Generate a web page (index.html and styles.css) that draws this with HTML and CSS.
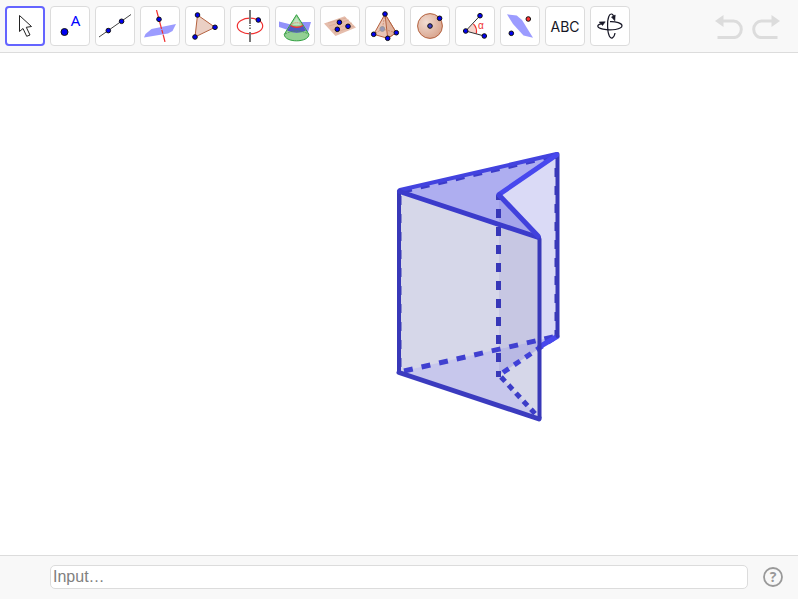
FILE: index.html
```html
<!DOCTYPE html>
<html lang="en">
<head>
<meta charset="utf-8">
<title>3D Graphics</title>
<link rel="stylesheet" href="styles.css">
</head>
<body>
<div class="app">
  <header class="toolbar">
    <div class="tools" role="toolbar" aria-label="Tools">
      <button class="tool selected" type="button" aria-label="Move">
        <svg class="icon" viewBox="4 4 32 32"><path d="M14.5 9.5V25.5L18 22.5L21.7 30.3L25 29L21.3 21.3L26.5 20.5Z" fill="#fff" stroke="#222" stroke-width="1"/></svg>
      </button>
      <button class="tool" type="button" aria-label="Point">
        <svg class="icon" viewBox="4 4 32 32"><circle class="dot" cx="14.5" cy="26" r="3.5"/><text class="point-label" x="25.5" y="20" text-anchor="middle">A</text></svg>
      </button>
      <button class="tool" type="button" aria-label="Line">
        <svg class="icon" viewBox="4 4 32 32"><path d="M4 31L36 8.5" stroke="#444"/><circle class="dot" cx="13.3" cy="24.6" r="2.3"/><circle class="dot" cx="26.6" cy="15.3" r="2.3"/></svg>
      </button>
      <button class="tool" type="button" aria-label="Perpendicular line">
        <svg class="icon" viewBox="4 4 32 32"><path d="M4 31.5L5.500 28L11.500 23L36 18L32.500 25L28 27.500Z" fill="#9c9cff"/><path d="M16.5 4L20.5 19M23.5 30L25 36" stroke="#f03030" stroke-width="1.2"/><path d="M20.5 19L23.5 30" stroke="#f03030" stroke-width="1.2" stroke-dasharray="4 1"/><circle class="dot" cx="19" cy="13.3" r="2.3"/></svg>
      </button>
      <button class="tool" type="button" aria-label="Polygon">
        <svg class="icon" viewBox="4 4 32 32"><path d="M12.5 9L30 21.3L10 31Z" fill="#ebd0c5" stroke="#b4623f"/><circle class="dot" cx="12.5" cy="9" r="2.3"/><circle class="dot" cx="30" cy="21.3" r="2.3"/><circle class="dot" cx="10" cy="31" r="2.3"/></svg>
      </button>
      <button class="tool" type="button" aria-label="Circle with axis">
        <svg class="icon" viewBox="4 4 32 32"><ellipse cx="20" cy="20" rx="12.7" ry="7.8" fill="none" stroke="#f03030" stroke-width="1.2"/><path d="M20 4V18M20 19V20M20 21.5V23M20 26V36" stroke="#777" stroke-width="2"/><circle class="dot" cx="28.3" cy="14" r="2.3"/></svg>
      </button>
      <button class="tool" type="button" aria-label="Intersect two surfaces">
        <svg class="icon" viewBox="4 4 32 32">
          <path d="M4 15.500L16 18.500L27 16L36 16L33 26L24 26L13 24L4 21Z" fill="#9292fa"/>
          <path d="M21.500 8.700L9.300 28.300C9.300 37 33.900 37 33.900 28.300Z" fill="#93d093" stroke="#30a040"/>
          <path d="M15.400 19.500Q22 23 28 19.500L31 24.500Q22 29 12 24.500Z" fill="#5058c0"/>
          <path d="M21.500 11L17 18.300Q21.500 20 26 18.300Z" fill="#bfe3bf"/>
          <path d="M10 28Q21.500 22 33.500 28" stroke="#489a55" fill="none" stroke-dasharray="2 1"/>
          <path d="M15.400 19.500Q22 23 28 19.500" stroke="#f03030" fill="none" stroke-width="1.4"/>
          <path d="M16.500 18Q22 15.500 27 18" stroke="#e07050" fill="none" stroke-dasharray="1 1"/>
        </svg>
      </button>
      <button class="tool" type="button" aria-label="Plane through three points">
        <svg class="icon" viewBox="4 4 32 32"><path d="M4 17.5L24.7 10.3L36 21.5L15.5 30Z" fill="#e5bdac"/><path d="M8 17L26 12M9 20L29 14M12 24L32 17M14 27L34 20" stroke="#d8a791" stroke-width=".7"/><circle class="dot" cx="19.4" cy="16.3" r="2.3"/><circle class="dot" cx="28" cy="20.3" r="2.3"/><circle class="dot" cx="17.3" cy="23.3" r="2.3"/></svg>
      </button>
      <button class="tool" type="button" aria-label="Pyramid">
        <svg class="icon" viewBox="4 4 32 32"><path d="M20 8L31.3 26.7L22.7 32.3L8.7 28.3Z" fill="#e9c5b6" stroke="#b4623f"/><path d="M20 8L22.7 32.3L31.3 26.7Z" fill="#dfb19c" stroke="#b4623f"/><path d="M20 8L17.3 23L8.7 28.3M17.3 23L31.3 26.7" fill="none" stroke="#c98466" stroke-width=".8" stroke-dasharray="2 1"/><circle cx="17.3" cy="23" r="2.4" fill="#9898b8" stroke="#999"/><circle class="dot" cx="20" cy="8" r="2.3"/><circle class="dot" cx="8.7" cy="28.3" r="2.3"/><circle class="dot" cx="22.7" cy="32.3" r="2.3"/><circle class="dot" cx="31.3" cy="26.7" r="2.3"/></svg>
      </button>
      <button class="tool" type="button" aria-label="Sphere">
        <svg class="icon" viewBox="4 4 32 32"><defs><radialGradient id="ball" cx=".35" cy=".35" r=".7"><stop offset="0" stop-color="#f1dcd2"/><stop offset="1" stop-color="#d9a58e"/></radialGradient></defs><circle cx="20" cy="20" r="12.4" fill="url(#ball)" stroke="#b4623f"/><circle class="dot faded" cx="20" cy="20" r="2.3"/><circle class="dot" cx="29.6" cy="12.3" r="2.3"/></svg>
      </button>
      <button class="tool" type="button" aria-label="Angle">
        <svg class="icon" viewBox="4 4 32 32"><path d="M10.7 25L18.4 17.8Q22.5 22 21.3 27.7Z" fill="#f6d5cd"/><path d="M18.4 17.8Q22.5 22 21.3 27.7" fill="none" stroke="#f03030" stroke-width="1.2"/><path d="M25 9.7L10.7 25L29.3 30" fill="none" stroke="#333"/><text class="angle-label" x="26" y="23" text-anchor="middle">α</text><circle class="dot" cx="25" cy="9.7" r="2.3"/><circle class="dot" cx="10.7" cy="25" r="2.3"/><circle class="dot" cx="29.3" cy="30" r="2.3"/></svg>
      </button>
      <button class="tool" type="button" aria-label="Reflect about plane">
        <svg class="icon" viewBox="4 4 32 32"><path d="M7 8.3L16.7 9.5L22 14L33 31.7L23.5 29.5L13 18Z" fill="#9c9cff"/><circle class="dot" cx="11.3" cy="27.3" r="2.3"/><circle class="dot red" cx="28.3" cy="13" r="2.3"/></svg>
      </button>
      <button class="tool text-tool" type="button" aria-label="Text">ABC</button>
      <button class="tool" type="button" aria-label="Rotate 3D graphics view">
        <svg class="icon" viewBox="4 4 32 32" fill="none" stroke="#161625" stroke-width="1.2"><path d="M11 17.8C6 19 7 22 13 23.2C21 25 32 23.3 32 19.8C32 17 26 15.5 20 15.7"/><path d="M25 27C24 32.5 21 33.5 19.3 30C17.2 25.5 17 15 18.8 10.5C20 7.5 22.5 7 23.5 10"/><path d="M9.2 16L15.2 15.8L12.5 19.5ZM21.5 11L25.2 9L24.8 14.8Z" fill="#161625" stroke-width=".6"/></svg>
      </button>
    </div>
    <div class="history">
      <button class="history-button" type="button" aria-label="Undo"><svg class="arrow" viewBox="0 0 28 24"><path d="M0 6L8.500 0V12Z" fill="#dcdcdc"/><path d="M8 6H18.500A7.800 8.300 0 0 1 18.500 22.600H2.500" fill="none" stroke="#dcdcdc" stroke-width="3"/></svg></button>
      <button class="history-button" type="button" aria-label="Redo"><svg class="arrow" viewBox="0 0 28 24"><path d="M28 6L19.500 0V12Z" fill="#dcdcdc"/><path d="M20 6H9.500A7.800 8.300 0 0 0 9.500 22.600H25.500" fill="none" stroke="#dcdcdc" stroke-width="3"/></svg></button>
    </div>
  </header>
  <main class="view">
    <svg class="scene" viewBox="0 53 798 502" role="img" aria-label="Prism">
      <!-- faces -->
      <path d="M399 191L540 237V419L399 372Z" fill="#d6d7e9"/>
      <path d="M499 195L557 154V337L540 348V237Z" fill="#dadaf6"/>
      <path d="M399 372L499 349V375L540 419Z" fill="#c7c7ec"/>
      <path d="M499 224L540 237V340L499 349Z" fill="#c7c7e3"/>
      <path d="M499 349L540 340V348L499 375Z" fill="#b9b9e4"/>
      <path d="M540 340L557 336L540 348Z" fill="#bdbdf0"/>
      <path d="M399 191L557 154L499 195L540 237Z" fill="#aeaef0"/>
      <path d="M499 195L540 237L499 224Z" fill="#a4a4eb"/>
      <!-- hidden edges -->
      <g fill="none" stroke-width="5">
        <path d="M498.500 195V377" stroke="#3737b8" stroke-dasharray="9 9" stroke-dashoffset="4"/>
        <path d="M404 371L557 336" stroke="#4040d0" stroke-dasharray="9 9"/>
        <path d="M503 372.500L557 336" stroke="#4040d8" stroke-dasharray="7 6.500"/>
        <path d="M501 377L540 419" stroke="#3c3cc8" stroke-dasharray="6 5"/>
        <path d="M401 196V370" stroke="#8989ce" stroke-width="2" stroke-dasharray="9 9"/>
        <path d="M556.500 158V335" stroke="#3737b8" stroke-width="4" stroke-dasharray="9 9" stroke-dashoffset="8"/>
        <path d="M403 191L553 156" stroke="#3b3bc8" stroke-dasharray="9 9"/>
      </g>
      <!-- visible edges -->
      <g fill="none" stroke-width="4" stroke-linecap="round">
        <path d="M540 346.500L557 336.500" stroke="#4848ed" stroke-width="5"/>
        <path d="M399 191V372M557.500 154V336M539.500 239V418" stroke="#3838b8"/>
        <path d="M399 372.500L539 419" stroke="#3b3bbf" stroke-width="5"/>
        <path d="M400 190L556.500 154" stroke="#4343df"/>
        <path d="M399.500 191.500L538.500 237.500" stroke="#3b3bcb" stroke-width="5"/>
        <path d="M556.500 155L499 194.500" stroke="#4848ee" stroke-width="5"/>
        <path d="M499 195L538 236" stroke="#4141dc" stroke-width="5"/>
      </g>
    </svg>
  </main>
  <footer class="input-bar">
    <input class="command" type="text" placeholder="Input…" aria-label="Input">
    <button class="help" type="button" aria-label="Help"><svg class="help-icon" viewBox="0 0 20 20"><circle cx="10" cy="10" r="9" fill="none" stroke="#999" stroke-width="1.800"/><text class="help-mark" x="10" y="15" text-anchor="middle">?</text></svg></button>
  </footer>
</div>
</body>
</html>
```
FILE: styles.css
```css
* {
  box-sizing: border-box;
}

body {
  margin: 0;
  background: #fff;
  font-family: "Liberation Sans", sans-serif;
}

.app {
  display: flex;
  flex-direction: column;
  height: 100vh;
  padding: 0 2px 1px 0;
}

button {
  margin: 0;
  padding: 0;
  font: inherit;
  cursor: pointer;
}

.toolbar {
  display: flex;
  justify-content: space-between;
  align-items: flex-start;
  padding: 6px 16px 6px 5px;
  background: #f8f8f8;
  border-bottom: 1px solid #dcdcdc;
}

.tools {
  display: flex;
  gap: 5px;
}

.tool {
  display: flex;
  align-items: center;
  justify-content: center;
  width: 40px;
  height: 40px;
  background: #fff;
  border: 1px solid #dcdcdc;
  border-radius: 4px;
}

.tool.selected {
  border: 2px solid #6464ff;
}

.text-tool {
  color: #161625;
  font-family: Inter, sans-serif;
  font-size: 14px;
}

.icon {
  flex: none;
  width: 32px;
  height: 32px;
}

.dot {
  fill: #0000f0;
  stroke: #111;
  stroke-width: 1;
}

.dot.faded {
  fill: #4040c0;
}

.dot.red {
  fill: #ff3030;
}

.point-label {
  fill: #00f;
  font-family: "Noto Sans", sans-serif;
  font-size: 15px;
}

.angle-label {
  fill: #f03030;
  font-family: "Liberation Sans", sans-serif;
  font-size: 10px;
}

.history {
  display: flex;
  gap: 9px;
  padding: 9px 2px 0 0;
}

.history-button {
  display: flex;
  background: none;
  border: 0;
}

.arrow {
  width: 28px;
  height: 24px;
}

.view {
  flex: 1;
  min-height: 0;
}

.scene {
  display: block;
  width: 100%;
  height: 100%;
}

.input-bar {
  display: flex;
  align-items: center;
  gap: 15px;
  height: 44px;
  padding: 0 15px 2px 50px;
  background: #f8f8f8;
  border-top: 1px solid #dcdcdc;
}

.command {
  flex: 1;
  min-width: 0;
  height: 24px;
  padding: 0 2px;
  color: #222;
  background: #fff;
  border: 1px solid #dcdcdc;
  border-radius: 5px;
  font-family: "Liberation Sans", sans-serif;
  font-size: 16px;
}

.command::placeholder {
  color: #808080;
}

.help {
  display: flex;
  background: none;
  border: 0;
}

.help-icon {
  width: 20px;
  height: 20px;
}

.help-mark {
  fill: #999;
  font-family: "Open Sans", sans-serif;
  font-size: 14px;
  font-weight: 700;
}
```
